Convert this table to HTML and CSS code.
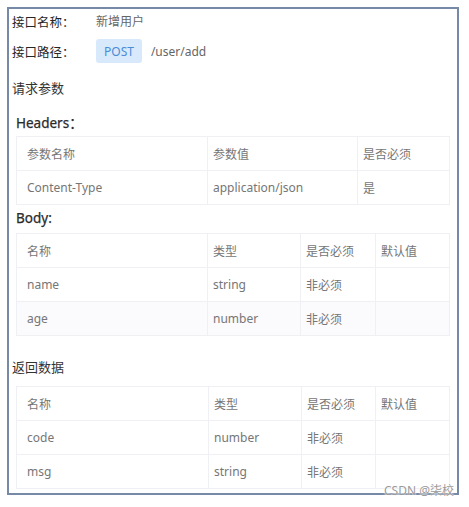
FILE: index.html
```html
<!DOCTYPE html>
<html lang="zh-CN">
<head>
<meta charset="utf-8">
<title>接口文档</title>
<link rel="stylesheet" href="styles.css">
</head>
<body>
<div class="page">
  <div class="frame">
    <div class="field">
      <span class="label">接口名称：</span>
      <span class="value">新增用户</span>
    </div>
    <div class="field field-path">
      <span class="label">接口路径：</span>
      <span class="method">POST</span>
      <span class="value path">/user/add</span>
    </div>

    <div class="section-title">请求参数</div>

    <div class="sub-title">Headers：</div>
    <table class="grid">
      <colgroup><col style="width:191px"><col style="width:150px"><col></colgroup>
      <tr><td>参数名称</td><td>参数值</td><td>是否必须</td></tr>
      <tr><td>Content-Type</td><td>application/json</td><td>是</td></tr>
    </table>

    <div class="sub-title sub-body">Body:</div>
    <table class="grid grid-body">
      <colgroup><col style="width:191px"><col style="width:93px"><col style="width:75px"><col></colgroup>
      <tr><td>名称</td><td>类型</td><td>是否必须</td><td>默认值</td></tr>
      <tr><td>name</td><td>string</td><td>非必须</td><td></td></tr>
      <tr class="stripe"><td>age</td><td>number</td><td>非必须</td><td></td></tr>
    </table>

    <div class="section-title section-return">返回数据</div>
    <table class="grid grid-return">
      <colgroup><col style="width:192px"><col style="width:93px"><col style="width:74px"><col></colgroup>
      <tr><td>名称</td><td>类型</td><td>是否必须</td><td>默认值</td></tr>
      <tr><td>code</td><td>number</td><td>非必须</td><td></td></tr>
      <tr><td>msg</td><td>string</td><td>非必须</td><td></td></tr>
    </table>
  </div>
  <div class="watermark">CSDN @柒校</div>
</div>
</body>
</html>
```

FILE: styles.css
```css
html, body {
  margin: 0;
  padding: 0;
  background: #ffffff;
}

body {
  font-family: "Noto Sans", "Noto Sans CJK SC", sans-serif;
  color: #333;
}

.page {
  position: relative;
  padding: 7px 0 0 7px;
  width: 469px;
  height: 507px;
  box-sizing: border-box;
}

.frame {
  width: 452px;
  height: 488px;
  box-sizing: border-box;
  border: 2px solid #7689a6;
  padding: 0 7px 0 3px;
  overflow: hidden;
  background: #fff;
}

.field {
  display: flex;
  align-items: center;
  height: 24px;
}

.field-path {
  margin-top: 6px;
}

.label {
  width: 84px;
  flex: none;
  font-size: 12.5px;
  font-weight: 400;
  color: #262626;
}

.value {
  font-size: 12px;
  color: #666;
}

.method {
  display: inline-flex;
  align-items: center;
  height: 24px;
  padding: 0 8px;
  border-radius: 3px;
  background: #d7e9fb;
  color: #4a8cd6;
  font-size: 12px;
  margin-right: 9px;
}

.section-title {
  margin-top: 13px;
  height: 24px;
  line-height: 24px;
  font-size: 13px;
  color: #333;
}

.section-return {
  margin-top: 19px;
}

.sub-title {
  margin: 11px 0 1px 4px;
  height: 24px;
  line-height: 24px;
  font-size: 13.5px;
  font-weight: 400;
  color: #2a2a2a;
  -webkit-text-stroke: 0.25px #2a2a2a;
}

.sub-body {
  margin: 1px 0 3px 4px;
}

.grid {
  margin-left: 4px;
  width: 434px;
  table-layout: fixed;
  border-collapse: collapse;
  font-size: 12px;
  color: #767676;
}

.grid-return {
  margin-top: 7px;
}

.grid td {
  height: 33px;
  padding: 0 4px 0 5px;
  border: 1px solid #eef0f4;
  white-space: nowrap;
  overflow: hidden;
}

.grid td:first-child {
  padding-left: 10px;
}

.grid .stripe td {
  background: #fbfafc;
}

.watermark {
  position: absolute;
  right: 15px;
  top: 481px;
  font-size: 12px;
  color: #9a9a9a;
  text-shadow: 0 0 2px #fff, 0 0 2px #fff;
}
```
